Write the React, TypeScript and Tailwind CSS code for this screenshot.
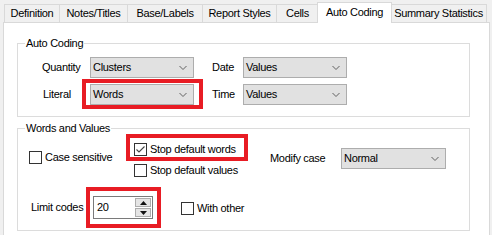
import React from "react";

const tabs = [
  { label: "Definition", w: "w-[56px]" },
  { label: "Notes/Titles", w: "w-[69px]" },
  { label: "Base/Labels", w: "w-[76px]" },
  { label: "Report Styles", w: "w-[75px]" },
  { label: "Cells", w: "w-[43px]" },
  { label: "Auto Coding", w: "w-[75px]", active: true },
  { label: "Summary Statistics", w: "w-[97px]" },
];

const Chevron = () => (
  <svg width="8" height="5" viewBox="0 0 8 5" className="absolute right-[6px] top-1/2 -translate-y-1/2">
    <path d="M0.5 0.5 L4 4 L7.5 0.5" fill="none" stroke="#606060" strokeWidth="1" />
  </svg>
);

const Combo = ({ value, w = "w-[104px]", children }: { value: string; w?: string; children?: React.ReactNode }) => (
  <div className={`relative ${w} h-[21px] shrink-0 border border-[#adadad] bg-[#e1e1e1] pl-[2px] flex items-center`}>
    <span>{value}</span>
    <Chevron />
    {children}
  </div>
);

const Check = ({ checked = false }: { checked?: boolean }) => (
  <span className="w-[13px] h-[13px] shrink-0 border border-[#333333] bg-white flex items-center justify-center">
    {checked && (
      <svg width="11" height="11" viewBox="0 0 11 11">
        <path d="M1.5 5.5 L4 8 L9.5 2.5" fill="none" stroke="#444444" strokeWidth="1.1" />
      </svg>
    )}
  </span>
);

const RedBox = ({ className }: { className: string }) => (
  <span className={`absolute border-4 border-[#e81c24] pointer-events-none ${className}`} />
);

export default function App() {
  return (
    <div className="w-[492px] h-[235px] overflow-hidden bg-[#f0f0f0] text-black text-[11px] leading-[13px] tracking-[-0.3px] font-['Liberation_Sans',Arial,sans-serif]">
      {/* tab strip */}
      <div className="flex items-end h-[22px] pl-[4px]">
        {tabs.map((t, i) =>
          t.active ? (
            <div
              key={t.label}
              className={`relative z-10 ${t.w} h-[21px] -mb-px -ml-[2px] -mr-[1px] border border-b-0 border-[#d9d9d9] bg-white flex items-start justify-center pt-[3px]`}
            >
              {t.label}
            </div>
          ) : (
            <div
              key={t.label}
              className={`${t.w} h-[18px] ${i > 0 ? "-ml-px" : ""} border border-b-0 border-[#d9d9d9] bg-[#f0f0f0] flex items-center justify-center`}
            >
              {t.label}
            </div>
          )
        )}
      </div>

      {/* panel */}
      <div className="ml-[3px] w-[487px] h-[220px] border border-[#d9d9d9] bg-white pt-[14px]">
        <fieldset className="ml-[13px] w-[453px] border border-[#dcdcdc] p-0 m-0">
          <legend className="ml-[7px] px-[1px]">Auto Coding</legend>
          <div className="pt-[7px] pb-[11px] pl-[24px] flex flex-col gap-[6px]">
            <div className="flex items-center h-[21px]">
              <span className="w-[48px]">Quantity</span>
              <Combo value="Clusters" />
              <span className="ml-[18px] w-[31px]">Date</span>
              <Combo value="Values" />
            </div>
            <div className="flex items-center h-[21px]">
              <span className="w-[48px] pl-px">Literal</span>
              <Combo value="Words">
                <RedBox className="-left-[9px] -right-[10px] -top-[6px] -bottom-[5px]" />
              </Combo>
              <span className="ml-[18px] w-[31px]">Time</span>
              <Combo value="Values" />
            </div>
          </div>
        </fieldset>

        <fieldset className="ml-[13px] mt-[5px] w-[453px] border border-[#dcdcdc] p-0 m-0">
          <legend className="ml-[7px] px-[1px]">Words and Values</legend>
          <div className="pt-[8px] pb-[11px] pl-[11px]">
            <div className="flex items-start h-[34px]">
              <label className="w-[105px] mt-[8px] flex items-center gap-[3px]">
                <Check />
                <span>Case sensitive</span>
              </label>
              <div className="w-[136px] flex flex-col gap-[8px]">
                <label className="relative flex items-center gap-[3px]">
                  <Check checked />
                  <span>Stop default words</span>
                  <RedBox className="-left-[8px] -top-[9px] w-[122px] h-[27px]" />
                </label>
                <label className="flex items-center gap-[3px]">
                  <Check />
                  <span>Stop default values</span>
                </label>
              </div>
              <div className="mt-[5px] flex items-center">
                <span className="w-[71px]">Modify case</span>
                <Combo value="Normal" w="w-[105px]" />
              </div>
            </div>

            <div className="mt-[19px] flex items-center h-[23px] pl-[2px]">
              <span className="w-[62px]">Limit codes</span>
              <div className="relative w-[60px] h-[23px] border border-[#7a7a7a] bg-white flex items-center pl-[3px]">
                <span>20</span>
                <div className="absolute right-[1px] top-[1px] bottom-[1px] w-[16px] flex flex-col gap-px">
                  <span className="flex-1 border border-[#adadad] bg-[#e5e5e5] flex items-center justify-center">
                    <svg width="7" height="4" viewBox="0 0 7 4"><path d="M3.5 0 L7 4 L0 4 Z" fill="#111" /></svg>
                  </span>
                  <span className="flex-1 border border-[#adadad] bg-[#e5e5e5] flex items-center justify-center">
                    <svg width="7" height="4" viewBox="0 0 7 4"><path d="M0 0 L7 0 L3.5 4 Z" fill="#111" /></svg>
                  </span>
                </div>
                <RedBox className="-left-[8px] -right-[9px] -top-[10px] -bottom-[10px]" />
              </div>
              <label className="ml-[28px] mt-[2px] flex items-center gap-[3px]">
                <Check />
                <span>With other</span>
              </label>
            </div>
          </div>
        </fieldset>
      </div>
    </div>
  );
}
